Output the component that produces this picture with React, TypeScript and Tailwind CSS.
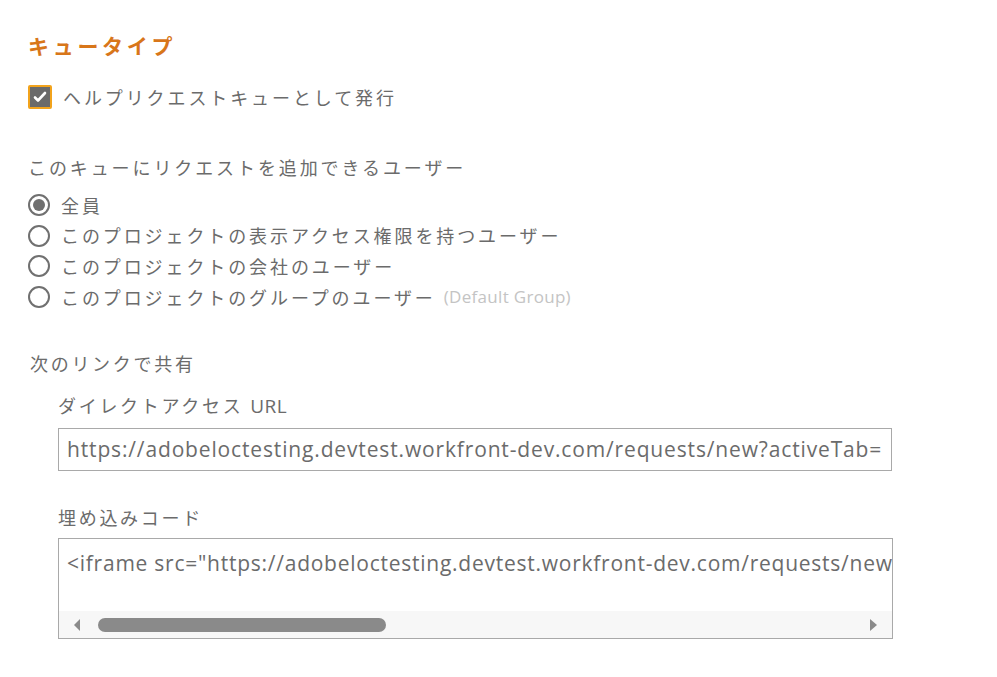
import React from "react";

const jp = { fontFamily: '"Noto Sans CJK JP", "Noto Sans", sans-serif' };
const latin = { fontFamily: '"Open Sans", "Liberation Sans", sans-serif' };

const Radio = ({ checked }: { checked?: boolean }) => (
  <span className="flex items-center justify-center w-[22px] h-[22px] rounded-full border-2 border-[#707070] bg-white shrink-0">
    {checked && <span className="w-[12px] h-[12px] rounded-full bg-[#6f6f6f]" />}
  </span>
);

const options = [
  { label: "全員", checked: true },
  { label: "このプロジェクトの表示アクセス権限を持つユーザー" },
  { label: "このプロジェクトの会社のユーザー" },
  { label: "このプロジェクトのグループのユーザー", extra: "(Default Group)" },
];

const App = () => {
  return (
    <div className="w-[997px] h-[677px] bg-white pl-[28px] pt-[31px] text-[#6b6b6b]" style={jp}>
      <h2 className="text-[21px] leading-[28px] font-bold tracking-[3.7px] text-[#d8761a]">キュータイプ</h2>

      <label className="flex items-center gap-[11px] mt-[24px] h-[28px]">
        <span className="flex items-center justify-center w-[24px] h-[24px] border-2 border-[#f2a31c] bg-[#6a6a6a] rounded-[2px]">
          <svg viewBox="0 0 16 16" className="w-[16px] h-[16px]">
            <path d="M3 8.5l3 3 7-7.5" fill="none" stroke="#fff" strokeWidth="2.6" strokeLinecap="round" strokeLinejoin="round" />
          </svg>
        </span>
        <span className="text-[18px] tracking-[2.9px]">ヘルプリクエストキューとして発行</span>
      </label>

      <p className="mt-[42px] text-[18px] leading-[28px] tracking-[2.9px]">このキューにリクエストを追加できるユーザー</p>

      <div className="flex flex-col mt-[9px]">
        {options.map((o) => (
          <div key={o.label} className="flex items-center gap-[11px] h-[30.6px]">
            <Radio checked={o.checked} />
            <span className="text-[18px] tracking-[2.9px]">{o.label}</span>
            {o.extra && (
              <span className="text-[17px] tracking-[0.3px] text-[#c4c4c4] -ml-[3px]" style={latin}>
                {o.extra}
              </span>
            )}
          </div>
        ))}
      </div>

      <p className="mt-[37px] text-[18px] leading-[28px] tracking-[2.7px] pl-[2px]">次のリンクで共有</p>

      <div className="pl-[30px]">
        <p className="mt-[14px] text-[18px] leading-[28px] tracking-[2.7px]">
          ダイレクトアクセス{" "}
          <span style={latin} className="text-[19px] tracking-[0.5px]">
            URL
          </span>
        </p>
        <div className="mt-[8px] w-[834px] h-[43px] border border-[#a9a9a9] flex items-center px-[8px] overflow-hidden">
          <span className="text-[21px] tracking-[0.85px] whitespace-nowrap text-[#6b6b6b]" style={latin}>
            https://adobeloctesting.devtest.workfront-dev.com/requests/new?activeTab=
          </span>
        </div>

        <p className="mt-[32px] text-[18px] leading-[28px] tracking-[2.7px]">埋め込みコード</p>
        <div className="mt-[7px] w-[835px] h-[101px] border border-[#a9a9a9] flex flex-col overflow-hidden">
          <div className="px-[8px] pt-[9px] h-[72px] overflow-hidden">
            <span className="text-[21px] tracking-[0.75px] whitespace-nowrap" style={latin}>
              &lt;iframe src="https://adobeloctesting.devtest.workfront-dev.com/requests/new
            </span>
          </div>
          <div className="flex items-center h-[27px] bg-[#f7f7f7] px-[15px] gap-[18px]">
            <span className="w-0 h-0 border-y-[6px] border-y-transparent border-r-[6px] border-r-[#8a8a8a]" />
            <span className="w-[288px] h-[14px] rounded-full bg-[#8a8a8a]" />
            <span className="flex-1" />
            <span className="w-0 h-0 border-y-[6px] border-y-transparent border-l-[7px] border-l-[#8a8a8a]" />
          </div>
        </div>
      </div>
    </div>
  );
};

export default App;
